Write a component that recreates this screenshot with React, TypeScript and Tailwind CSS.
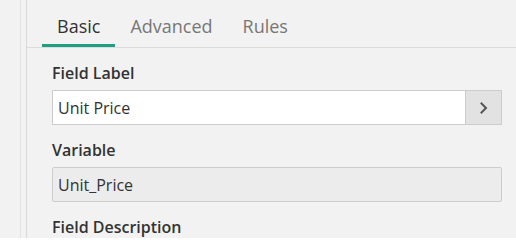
import React from "react";

export default function App() {
  const font = { fontFamily: '"Open Sans", "Noto Sans", sans-serif' };
  return (
    <div
      className="flex h-[238px] w-[516px] overflow-hidden bg-[#f2f2f2] text-[#333]"
      style={font}
    >
      <div className="w-[21px] shrink-0 border-r border-[#e3e3e3] bg-[#f2f2f2]" />
      <div className="w-[5px] shrink-0 bg-[#f2f2f2]" />
      <div className="flex min-w-0 flex-1 flex-col border-l border-[#d9d9d9] bg-[#f2f2f2]">
        <div className="flex h-[48px] shrink-0 border-b border-[#dcdcdc] pl-[15px]">
          <div className="box-border flex h-full items-start border-b-[3px] border-[#1f9e82] px-[15px] pt-[14px] text-[18px] leading-[24px] text-[#333]">
            Basic
          </div>
          <div className="box-border flex h-full items-start border-b-[3px] border-transparent px-[15px] pt-[14px] text-[18px] leading-[24px] text-[#777]">
            Advanced
          </div>
          <div className="box-border flex h-full items-start border-b-[3px] border-transparent px-[15px] pt-[14px] text-[18px] leading-[24px] text-[#777]">
            Rules
          </div>
        </div>
        <div className="flex flex-col pl-[25px] pr-[14px]">
          <div className="mt-[14px] text-[16px] font-semibold leading-[22px] text-[#333]">
            Field Label
          </div>
          <div className="mt-[6px] flex h-[35px] border border-[#cccccc] bg-white">
            <div className="flex flex-1 items-center pl-[5px] text-[16px] text-[#333]">
              Unit Price
            </div>
            <div className="flex w-[36px] items-center justify-center border-l border-[#cccccc] bg-[#e2e2e2]">
              <svg width="8" height="12" viewBox="0 0 8 12" fill="none">
                <path
                  d="M1.5 1.5 L6 6 L1.5 10.5"
                  stroke="#555"
                  strokeWidth="2"
                  strokeLinecap="square"
                />
              </svg>
            </div>
          </div>
          <div className="mt-[14px] text-[16px] font-semibold leading-[22px] text-[#333]">
            Variable
          </div>
          <div className="mt-[6px] flex h-[35px] items-center rounded-[2px] border border-[#cccccc] bg-[#ececec] pl-[5px] text-[16px] text-[#333]">
            Unit_Price
          </div>
          <div className="mt-[14px] text-[16px] font-semibold leading-[22px] text-[#333]">
            Field Description
          </div>
        </div>
      </div>
    </div>
  );
}
